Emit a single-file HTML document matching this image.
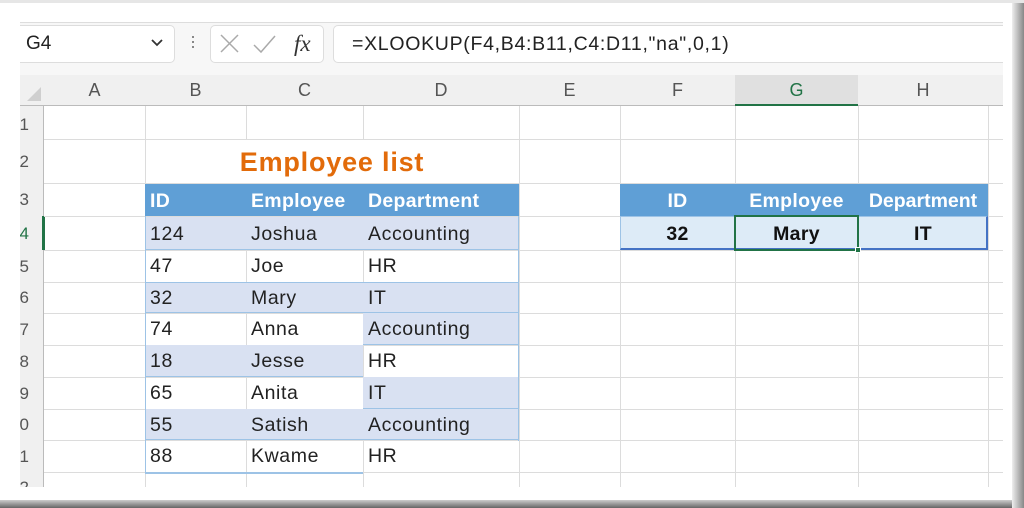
<!DOCTYPE html>
<html><head><meta charset="utf-8"><style>
*{margin:0;padding:0;box-sizing:border-box}
body{width:1024px;height:508px;background:#fff;position:relative;overflow:hidden;font-family:"Liberation Sans",sans-serif;}
.a{position:absolute}
.t{position:absolute;font-size:19.5px;color:#222;line-height:32px;white-space:nowrap;letter-spacing:0.6px}
.b{font-weight:bold;letter-spacing:0.3px}
.vl{position:absolute;width:1px;background:#dcdcdc}
.hl{position:absolute;height:1px;background:#dcdcdc}
.ch{position:absolute;top:75px;height:31px;font-size:18px;color:#555;text-align:center;line-height:31px}
.rn{position:absolute;right:14px;font-size:17px;color:#555;line-height:20px;text-align:right}
</style></head><body>
<!-- frame shadow -->
<div class="a" style="left:0;top:500px;width:1024px;height:8px;background:linear-gradient(#ccc,#666)"></div>
<div class="a" style="left:1012px;top:0;width:12px;height:508px;background:linear-gradient(90deg,#eee,#888)"></div>
<div class="a" style="left:0;top:0;width:1024px;height:3px;background:#e6e6e6"></div>

<!-- toolbar -->
<div class="a" style="left:20px;top:22px;width:983px;height:53px;background:#f7f7f7;border-top:1px solid #ddd"></div>
<div class="a" style="left:20px;top:25px;width:155px;height:38px;background:#fff;border:1px solid #ddd;border-left:none;border-radius:0 5px 5px 0"></div>
<div class="t" style="left:26px;top:28px;font-size:19px;letter-spacing:0">G4</div>
<svg class="a" style="left:150px;top:38px" width="14" height="10"><path d="M2 2 L7 7 L12 2" stroke="#333" stroke-width="1.8" fill="none"/></svg>
<div class="a" style="left:192px;top:36px;width:2px;height:2px;background:#888;box-shadow:0 5px #888,0 10px #888"></div>
<div class="a" style="left:210px;top:25px;width:114px;height:38px;background:#fff;border:1px solid #ddd;border-radius:5px"></div>
<svg class="a" style="left:216px;top:31px" width="110" height="28"><path d="M5 4 L22 21 M22 4 L5 21" stroke="#aaa" stroke-width="1.5"/><path d="M38 14 L45 21 L59 5" stroke="#aaa" stroke-width="1.5" fill="none"/><text x="78" y="20" font-family="Liberation Serif" font-style="italic" font-size="23" fill="#333">fx</text></svg>
<div class="a" style="left:333px;top:25px;width:670px;height:38px;background:#fff;border:1px solid #ddd;border-right:none;border-radius:5px 0 0 5px"></div>
<div class="t" style="left:352px;top:28px;font-size:19.5px;letter-spacing:0.7px">=XLOOKUP(F4,B4:B11,C4:D11,"na",0,1)</div>

<!-- column header -->
<div class="a" style="left:20px;top:75px;width:983px;height:31px;background:#f0f0f0;border-bottom:1px solid #bbb"></div>
<div class="a" style="left:735px;top:75px;width:123px;height:31px;background:#e0e0e0;border-bottom:2px solid #217346"></div>
<svg class="a" style="left:26px;top:86px" width="16" height="16"><path d="M15 1 L15 15 L1 15 Z" fill="#cfcfcf"/></svg>
<div class="ch" style="left:44px;width:101px">A</div>
<div class="ch" style="left:145px;width:101px">B</div>
<div class="ch" style="left:246px;width:117px">C</div>
<div class="ch" style="left:363px;width:156px">D</div>
<div class="ch" style="left:519px;width:101px">E</div>
<div class="ch" style="left:620px;width:115px">F</div>
<div class="ch" style="left:735px;width:123px;color:#217346">G</div>
<div class="ch" style="left:858px;width:130px">H</div>

<!-- row header -->
<div class="a" style="left:20px;top:106px;width:24px;height:381px;background:#f0f0f0;border-right:1px solid #bbb;overflow:hidden">
<div class="rn" style="top:9px">1</div>
<div class="rn" style="top:46px">2</div>
<div class="rn" style="top:84px">3</div>
<div class="rn" style="top:118px;color:#217346">4</div>
<div class="rn" style="top:151px">5</div>
<div class="rn" style="top:182px">6</div>
<div class="rn" style="top:214px">7</div>
<div class="rn" style="top:246px">8</div>
<div class="rn" style="top:278px">9</div>
<div class="rn" style="top:309px">10</div>
<div class="rn" style="top:341px">11</div>
<div class="rn" style="top:372px">12</div>
</div>
<div class="a" style="left:42px;top:216px;width:3px;height:34px;background:#217346"></div>

<!-- grid lines -->
<div class="hl" style="left:44px;top:139px;width:959px"></div>
<div class="hl" style="left:44px;top:183px;width:959px"></div>
<div class="hl" style="left:44px;top:216px;width:959px"></div>
<div class="hl" style="left:44px;top:250px;width:959px"></div>
<div class="hl" style="left:44px;top:282px;width:959px"></div>
<div class="hl" style="left:44px;top:313px;width:959px"></div>
<div class="hl" style="left:44px;top:345px;width:959px"></div>
<div class="hl" style="left:44px;top:377px;width:959px"></div>
<div class="hl" style="left:44px;top:409px;width:959px"></div>
<div class="hl" style="left:44px;top:440px;width:959px"></div>
<div class="hl" style="left:44px;top:472px;width:959px"></div>
<div class="vl" style="left:145px;top:106px;height:381px"></div>
<div class="vl" style="left:246px;top:106px;height:33px"></div>
<div class="vl" style="left:246px;top:183px;height:304px"></div>
<div class="vl" style="left:363px;top:106px;height:33px"></div>
<div class="vl" style="left:363px;top:183px;height:304px"></div>
<div class="vl" style="left:519px;top:106px;height:381px"></div>
<div class="vl" style="left:620px;top:106px;height:381px"></div>
<div class="vl" style="left:735px;top:106px;height:381px"></div>
<div class="vl" style="left:858px;top:106px;height:381px"></div>
<div class="vl" style="left:988px;top:106px;height:381px"></div>

<!-- title -->
<div class="a" style="left:145px;top:142px;width:374px;text-align:center;font-size:27px;font-weight:bold;color:#e26b0a;letter-spacing:0.8px;line-height:40px">Employee list</div>

<!-- table 1 -->
<div class="a" style="left:145px;top:184px;width:374px;height:32px;background:#5f9fd6"></div>
<div class="t b" style="left:150px;top:185px;color:#fff">ID</div>
<div class="t b" style="left:251px;top:185px;color:#fff">Employee</div>
<div class="t b" style="left:368px;top:185px;color:#fff">Department</div>

<div class="a" style="left:145px;top:217px;width:374px;height:33px;background:#d9e1f2;border-bottom:1px solid #9dc3e6"></div>
<div class="a" style="left:145px;top:282px;width:374px;height:31px;background:#d9e1f2;border-top:1px solid #9dc3e6;border-bottom:1px solid #9dc3e6"></div>
<div class="a" style="left:363px;top:313px;width:156px;height:32px;background:#d9e1f2;border-bottom:1px solid #9dc3e6"></div>
<div class="a" style="left:145px;top:345px;width:218px;height:32px;background:#d9e1f2;border-bottom:1px solid #9dc3e6"></div>
<div class="a" style="left:363px;top:377px;width:156px;height:32px;background:#d9e1f2;border-bottom:1px solid #9dc3e6"></div>
<div class="a" style="left:145px;top:409px;width:374px;height:31px;background:#d9e1f2;border-bottom:1px solid #9dc3e6"></div>
<div class="a" style="left:145px;top:472px;width:218px;height:2px;background:#9dc3e6"></div>
<div class="a" style="left:145px;top:216px;width:1px;height:257px;background:#9dc3e6"></div>
<div class="a" style="left:518px;top:216px;width:1px;height:225px;background:#9dc3e6"></div>

<div class="t" style="left:150px;top:218px">124</div><div class="t" style="left:251px;top:218px">Joshua</div><div class="t" style="left:368px;top:218px">Accounting</div>
<div class="t" style="left:150px;top:250px">47</div><div class="t" style="left:251px;top:250px">Joe</div><div class="t" style="left:368px;top:250px">HR</div>
<div class="t" style="left:150px;top:282px">32</div><div class="t" style="left:251px;top:282px">Mary</div><div class="t" style="left:368px;top:282px">IT</div>
<div class="t" style="left:150px;top:313px">74</div><div class="t" style="left:251px;top:313px">Anna</div><div class="t" style="left:368px;top:313px">Accounting</div>
<div class="t" style="left:150px;top:345px">18</div><div class="t" style="left:251px;top:345px">Jesse</div><div class="t" style="left:368px;top:345px">HR</div>
<div class="t" style="left:150px;top:377px">65</div><div class="t" style="left:251px;top:377px">Anita</div><div class="t" style="left:368px;top:377px">IT</div>
<div class="t" style="left:150px;top:409px">55</div><div class="t" style="left:251px;top:409px">Satish</div><div class="t" style="left:368px;top:409px">Accounting</div>
<div class="t" style="left:150px;top:440px">88</div><div class="t" style="left:251px;top:440px">Kwame</div><div class="t" style="left:368px;top:440px">HR</div>

<!-- table 2 -->
<div class="a" style="left:620px;top:184px;width:368px;height:32px;background:#5f9fd6"></div>
<div class="t b" style="left:620px;width:115px;text-align:center;top:185px;color:#fff">ID</div>
<div class="t b" style="left:735px;width:123px;text-align:center;top:185px;color:#fff">Employee</div>
<div class="t b" style="left:858px;width:130px;text-align:center;top:185px;color:#fff;letter-spacing:0">Department</div>
<div class="a" style="left:620px;top:216px;width:368px;height:34px;background:#ddebf7;border:1px solid #9dc3e6;border-right:2px solid #4472c4;border-bottom:2px solid #4472c4"></div>
<div class="a" style="left:734px;top:215px;width:125px;height:36px;border:2px solid #217346"></div>
<div class="a" style="left:855px;top:247px;width:6px;height:6px;background:#217346;border:1px solid #fff"></div>
<div class="t b" style="left:620px;width:115px;text-align:center;top:218px;color:#111">32</div>
<div class="t b" style="left:735px;width:123px;text-align:center;top:218px;color:#111">Mary</div>
<div class="t b" style="left:858px;width:130px;text-align:center;top:218px;color:#111">IT</div>
</body></html>
